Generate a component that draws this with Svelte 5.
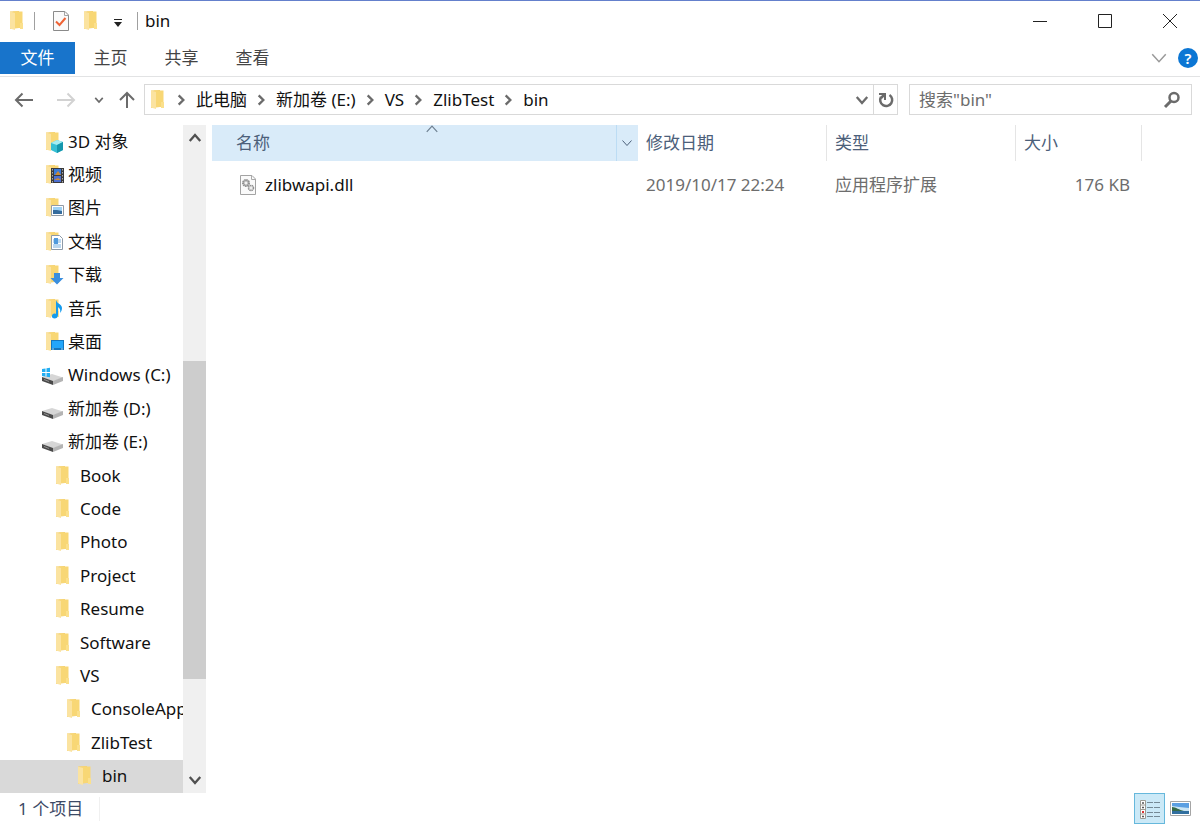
<script lang="ts">
	interface TreeItem {
		name: string;
		level: number;
		icon: string;
	}

	const menus = ['主页', '共享', '查看'];
	const crumbs = ['此电脑', '新加卷 (E:)', 'VS', 'ZlibTest', 'bin'];
	const tree: TreeItem[] = [
		{ name: '3D 对象', level: 0, icon: 'objects' },
		{ name: '视频', level: 0, icon: 'video' },
		{ name: '图片', level: 0, icon: 'picture' },
		{ name: '文档', level: 0, icon: 'document' },
		{ name: '下载', level: 0, icon: 'download' },
		{ name: '音乐', level: 0, icon: 'music' },
		{ name: '桌面', level: 0, icon: 'desktop' },
		{ name: 'Windows (C:)', level: 0, icon: 'system' },
		{ name: '新加卷 (D:)', level: 0, icon: 'drive' },
		{ name: '新加卷 (E:)', level: 0, icon: 'drive' },
		{ name: 'Book', level: 1, icon: 'folder' },
		{ name: 'Code', level: 1, icon: 'folder' },
		{ name: 'Photo', level: 1, icon: 'folder' },
		{ name: 'Project', level: 1, icon: 'folder' },
		{ name: 'Resume', level: 1, icon: 'folder' },
		{ name: 'Software', level: 1, icon: 'folder' },
		{ name: 'VS', level: 1, icon: 'folder' },
		{ name: 'ConsoleApp', level: 2, icon: 'folder' },
		{ name: 'ZlibTest', level: 2, icon: 'folder' },
		{ name: 'bin', level: 3, icon: 'folder' }
	];
	const files = [
		{ name: 'zlibwapi.dll', date: '2019/10/17 22:24', type: '应用程序扩展', size: '176 KB' }
	];
	// share of the tree above, inside and below the visible part
	const scroll = { above: 209, visible: 316, below: 88 };

	let selected = $state('bin');
	let view = $state('details');
</script>

{#snippet folder()}
	<path d="M2 2.5 11 2v17l-9 1z" fill="#f3cf6e" />
	<path d="M5 2.500h9.500v16.500H5z" fill="#f8d775" />
	<path d="M2 2.500 7 4v17L2 19.500z" fill="#fbe3a0" />
	<path d="M12 14h3v6h-3z" fill="#fbe08c" />
{/snippet}

{#snippet folderIcon()}
	<svg class="icon" width="24" height="24" viewBox="0 0 24 24" aria-hidden="true">
		{@render folder()}
	</svg>
{/snippet}

{#snippet chevron(dir: string, size: number, weight: number)}
	<svg width={size} height={size} viewBox="0 0 12 12" fill="none" stroke="currentColor" stroke-width={weight} aria-hidden="true">
		{#if dir === 'down'}
			<path d="M1.500 3.500 6 8.500l4.500-5" />
		{:else if dir === 'up'}
			<path d="M1.500 8.500 6 3.500l4.500 5" />
		{:else}
			<path d="M4 2l4 4-4 4" />
		{/if}
	</svg>
{/snippet}

{#snippet treeIcon(icon: string)}
	<svg class="icon" width="24" height="24" viewBox="0 0 24 24" aria-hidden="true">
		{#if icon === 'drive' || icon === 'system'}
			<path d="M0 14 10 11l11 3.500-10 4z" fill="#d6d6d6" />
			<path d="M0 14l11 4v4L0 18z" fill="#4a4a4a" />
			<path d="M11 18l10-4v4l-10 4z" fill="#b4b4b4" />
			<path d="M2 16.500l5 2" stroke="#8d8d8d" />
			{#if icon === 'system'}
				<path d="M0 6l3.500-.5v3.500H0zM4.500 5.300 8 4.800v4.200H4.500zM0 10h3.500v3.500L0 13zM4.500 10H8v4.200l-3.500-.5z" fill="#23aef2" />
			{/if}
		{:else if icon === 'folder'}
			{@render folder()}
		{:else}
			<g transform="translate(2 0)">{@render folder()}</g>
			{#if icon === 'objects'}
				<path d="M9 13l6-3 6 2v8l-6 3-6-3z" fill="#35bfd3" />
				<path d="M9 13l6-3 6 2-6 3z" fill="#a5edf2" />
				<path d="M15 15l6-3v8l-6 3z" fill="#1597ad" />
			{:else if icon === 'video'}
				<path d="M9 5h13v15H9z" fill="#39393b" />
				<path d="M12 6h7v6h-7z" fill="#3979d8" />
				<path d="M12 13h7v6h-7z" fill="#4d6fd0" />
				<path d="M13 12l3-4 3 4zM12 17l4-2 3 2" fill="#c98936" />
				<path d="M10.500 6v14M20.500 6v14" stroke="#aaa" stroke-dasharray="1.500 1.500" />
			{:else if icon === 'picture'}
				<path d="M9.500 9.500h12v10h-12z" fill="#fff" stroke="#929ba5" />
				<path d="M11 11h9v4h-9z" fill="#9ed2f4" />
				<path d="M11 14l4 0 5 1v3h-9z" fill="#356c9d" />
			{:else if icon === 'document'}
				<path d="M9.500 5.500h8l3 3v11h-11z" fill="#fff" stroke="#8d9aa8" />
				<path d="M11 10h8M11 12h8M11 15h8M11 17h8" stroke="#75afe0" />
				<path d="M12 8h4v6h-4z" fill="#4f9adc" />
			{:else if icon === 'download'}
				<path d="M12 10h6v5h3.500L15 21.500 8.500 15H12z" fill="#3a8fdf" />
			{:else if icon === 'music'}
				<path d="M14 3c1 4 6 4 6 8 0 2-1 4-2 5 1-4-1-5-2-6v8c0 5-7 4-6 1 0-2 2-3 4-2z" fill="#159bed" />
			{:else}
				<path d="M9 10h13v10H9z" fill="#1476bd" />
				<path d="M10 11h11v7H10z" fill="#22a6fa" />
				<path d="M10 19h2M19 19h2" stroke="#9cd3f5" />
			{/if}
		{/if}
	</svg>
{/snippet}

<div class="window">
	<header class="titlebar">
		<div class="quick">
			{@render folderIcon()}
			<span class="divider"></span>
			<button class="quick-btn" aria-label="属性">
				<svg width="18" height="22" viewBox="0 0 18 22" fill="none" aria-hidden="true">
					<path d="M1.500 1.500H13l3.500 3.500v15.500h-15z" fill="#fafafa" stroke="#8a8a8a" />
					<path d="M12.500 1.500V5.500h4" stroke="#a5a5a5" />
					<path d="M4 11.500l3.500 3.500 6-7" stroke="#ef6335" stroke-width="2" />
				</svg>
			</button>
			<button class="quick-btn new-folder" aria-label="新建文件夹">{@render folderIcon()}</button>
			<button class="customize" aria-label="自定义快速访问工具栏">
				<svg width="10" height="10" viewBox="0 0 10 10" fill="#222" aria-hidden="true">
					<path d="M1 1h8v1H1zM1 4h8L5 9z" />
				</svg>
			</button>
			<span class="divider"></span>
		</div>
		<h1 class="title">bin</h1>
		<div class="controls">
			<button aria-label="最小化">
				<svg width="16" height="16" viewBox="0 0 16 16" stroke="#222"><path d="M1 8.500h14" /></svg>
			</button>
			<button aria-label="最大化">
				<svg width="16" height="16" viewBox="0 0 16 16" fill="none" stroke="#222"><path d="M1.500 1.500h13v13h-13z" /></svg>
			</button>
			<button aria-label="关闭">
				<svg width="16" height="16" viewBox="0 0 16 16" stroke="#222"><path d="M1 1l14 14M15 1 1 15" /></svg>
			</button>
		</div>
	</header>

	<nav class="menubar">
		<button class="menu file">文件</button>
		{#each menus as menu}
			<button class="menu">{menu}</button>
		{/each}
		<div class="menu-tools">
			<button class="expand" aria-label="展开功能区">{@render chevron('down', 18, 1)}</button>
			<button class="help" aria-label="帮助">?</button>
		</div>
	</nav>

	<div class="navbar">
		<div class="history">
			<button aria-label="后退">
				<svg width="20" height="18" viewBox="0 0 20 18" fill="none" stroke="#6b6b6b" stroke-width="2"><path d="M19 9H2M8.500 2.500 2 9l6.500 6.500" /></svg>
			</button>
			<button aria-label="前进" disabled>
				<svg width="20" height="18" viewBox="0 0 20 18" fill="none" stroke="#d2d2d2" stroke-width="2"><path d="M1 9h17M11.500 2.500 18 9l-6.500 6.500" /></svg>
			</button>
			<button class="recent" aria-label="最近浏览的位置">{@render chevron('down', 10, 2)}</button>
			<button aria-label="向上">
				<svg width="18" height="20" viewBox="0 0 18 20" fill="none" stroke="#6b6b6b" stroke-width="2"><path d="M9 18V3M2 10l7-7 7 7" /></svg>
			</button>
		</div>
		<div class="address">
			{@render folderIcon()}
			{#each crumbs as crumb}
				<span class="crumb-sep">{@render chevron('right', 14, 2)}</span>
				<a class="crumb" href="#{crumb}">{crumb}</a>
			{/each}
			<button class="drop" aria-label="以前的位置">{@render chevron('down', 14, 2)}</button>
			<button class="refresh" aria-label="刷新">
				<svg width="18" height="18" viewBox="0 0 18 18" fill="none" stroke="#6b6b6b" stroke-width="2">
					<path d="M12.500 4A6 6 0 1 1 4 6" stroke-width="2.500" />
					<path d="M2 3h6v6" />
					<path d="M4 7l3.500-3.500" stroke-width="2.500" />
				</svg>
			</button>
		</div>
		<div class="search">
			<input type="search" placeholder="搜索&quot;bin&quot;" aria-label="搜索" />
			<svg width="18" height="18" viewBox="0 0 18 18" fill="none" stroke="#6b6b6b" aria-hidden="true">
				<circle cx="11" cy="6.500" r="4.500" stroke-width="2.500" />
				<path d="M8 10l-6 6" stroke-width="3" />
			</svg>
		</div>
	</div>

	<main class="body">
		<aside class="sidebar">
			<div class="tree">
				{#each tree as item}
					<button
						class="tree-item"
						class:selected={selected === item.name}
						style="padding-left: {42 + Math.ceil(item.level * 11.3)}px"
						onclick={() => (selected = item.name)}
					>
						{@render treeIcon(item.icon)}
						<span>{item.name}</span>
					</button>
				{/each}
			</div>
			<div class="scrollbar">
				<button aria-label="向上滚动">{@render chevron('up', 14, 2)}</button>
				<div style="flex-grow: {scroll.above}"></div>
				<div class="thumb" style="flex-grow: {scroll.visible}"></div>
				<div style="flex-grow: {scroll.below}"></div>
				<button aria-label="向下滚动">{@render chevron('down', 14, 2)}</button>
			</div>
		</aside>

		<section class="content">
			<table class="files">
				<colgroup>
					<col class="col-name" />
					<col class="col-date" />
					<col class="col-type" />
					<col class="col-size" />
					<col />
				</colgroup>
				<thead>
					<tr>
						<th class="sorted">
							<div class="sorted-inner">
								<span>名称</span>
								<button aria-label="筛选">{@render chevron('down', 12, 1)}</button>
							</div>
							<span class="sort-mark">{@render chevron('up', 14, 1)}</span>
						</th>
						<th>修改日期</th>
						<th>类型</th>
						<th>大小</th>
						<td></td>
					</tr>
				</thead>
				<tbody>
					{#each files as file}
						<tr>
							<td class="name">
								<div class="name-inner">
									<svg width="18" height="22" viewBox="0 0 18 22" fill="none" aria-hidden="true">
										<path d="M1.500 1.500H13l3.500 3.500v15.500h-15z" fill="#fafafa" stroke="#a3a3a3" />
										<path d="M12.500 1.500V5.500h4" stroke="#aaa" />
										<circle cx="7" cy="9" r="3" fill="#ccc" stroke="#909090" stroke-width="2" stroke-dasharray="1.500 .5" />
										<circle cx="7" cy="9" r="1" fill="#fff" />
										<circle cx="12" cy="14" r="2.500" fill="#eee" stroke="#909090" stroke-width="1.500" stroke-dasharray="1.500 .5" />
									</svg>
									<span>{file.name}</span>
								</div>
							</td>
							<td>{file.date}</td>
							<td>{file.type}</td>
							<td class="size">{file.size}</td>
							<td></td>
						</tr>
					{/each}
				</tbody>
			</table>
		</section>
	</main>

	<footer class="statusbar">
		<span class="count">1 个项目</span>
		<div class="views">
			<button class:active={view === 'details'} aria-label="详细信息" onclick={() => (view = 'details')}>
				<svg width="22" height="22" viewBox="0 0 22 22" fill="none" aria-hidden="true">
					<path d="M1.500 2.500h5v18h-5zM1.500 7h5M1.500 11.500h5M1.500 16h5" fill="#fff" stroke="#9c9c94" />
					<path d="M3 5h2M3 9.500h2M3 18.500h2" stroke="#555" stroke-width="1.500" />
					<path d="M3 14h2" stroke="#d33" stroke-width="2" />
					<path d="M8 4.500h6M15 4.500h6M8 9.500h6M15 9.500h6M8 14.500h6M15 14.500h6M8 18.500h6M15 18.500h6" stroke="#758a96" />
				</svg>
			</button>
			<button class:active={view === 'icons'} aria-label="大图标" onclick={() => (view = 'icons')}>
				<svg width="22" height="16" viewBox="0 0 22 16" aria-hidden="true">
					<path d="M.5.500h20v14H.5z" fill="#fff" stroke="#a5a5a5" />
					<path d="M2 2h17v5H2z" fill="#5b9fe2" />
					<path d="M2 5l7 1 10 1v3H2z" fill="#c9e4f4" />
					<path d="M2 6c4 0 7 3 12 4H2z" fill="#376b48" />
					<path d="M2 10h17v3H2z" fill="#316f9f" />
				</svg>
			</button>
		</div>
	</footer>
</div>

<style>
	:global(body) {
		background: #fff;
	}

	.window {
		display: flex;
		flex-direction: column;
		min-height: 100vh;
		box-sizing: border-box;
		border-top: 1px solid #6480cc;
		background: #fff;
		color: #111;
		font-family: 'Noto Sans', 'Noto Sans CJK SC', sans-serif;
		font-size: 17px;
		line-height: 24px;
	}

	button {
		display: flex;
		align-items: center;
		justify-content: center;
		margin: 0;
		padding: 0;
		border: none;
		background: none;
		color: inherit;
		font: inherit;
	}

	svg {
		display: block;
		flex: none;
	}

	/* 标题栏 */
	.titlebar {
		display: flex;
		align-items: center;
		height: 39px;
		margin-bottom: 2px;
	}

	.quick {
		display: flex;
		align-items: center;
		padding-left: 8px;
	}

	.quick-btn {
		margin-left: 9px;
	}

	.quick-btn.new-folder {
		margin-left: 12px;
	}

	.customize {
		width: 24px;
		height: 24px;
		padding-top: 4px;
		box-sizing: border-box;
	}

	.divider {
		width: 1px;
		height: 18px;
		margin: 0 8px 0 2px;
		background: #a0a0a0;
	}

	.customize + .divider {
		margin: 0 7px;
	}

	.title {
		margin: 0;
		font-size: 17px;
		font-weight: 400;
	}

	.controls {
		display: flex;
		margin-left: auto;
	}

	.controls button {
		width: 65px;
		height: 39px;
	}

	.controls button:first-child {
		width: 64px;
	}

	.controls button:last-child {
		width: 66px;
		padding-right: 0;
		margin-right: -3px;
	}

	/* 菜单栏 */
	.menubar {
		display: flex;
		height: 34px;
		border-bottom: 1px solid #e2e3e4;
	}

	.menu {
		width: 71px;
		height: 32px;
		color: #444;
	}

	.menu.file {
		width: 75px;
		background: #1874cb;
		color: #fff;
	}

	.menu-tools {
		display: flex;
		align-items: center;
		gap: 10px;
		margin-left: auto;
		padding: 0 2px 2px 0;
	}

	.expand {
		color: #999;
	}

	.help {
		width: 20px;
		height: 20px;
		border-radius: 50%;
		background: #0b76d4;
		color: #fff;
		font-size: 15px;
		font-weight: 600;
	}

	/* 地址栏 */
	.navbar {
		display: flex;
		align-items: center;
		padding: 7px 8px 10px 14px;
	}

	.history {
		display: flex;
		align-items: center;
		width: 130px;
		gap: 22px;
	}

	.recent {
		width: 10px;
		margin: 0 -8px 0 -4px;
		color: #6b6b6b;
	}

	.address {
		display: flex;
		flex: 1;
		align-items: center;
		min-width: 0;
		height: 29px;
		padding-left: 4px;
		border: 1px solid #d9d9d9;
	}

	.crumb-sep {
		width: 14px;
		margin: 0 8px 0 7px;
		color: #6b6b6b;
	}

	.address .icon + .crumb-sep {
		margin-left: 1px;
	}

	.crumb {
		color: inherit;
		text-decoration: none;
		white-space: nowrap;
	}

	.drop {
		margin-left: auto;
		width: 22px;
		height: 29px;
		color: #6b6b6b;
	}

	.refresh {
		width: 24px;
		height: 29px;
		border-left: 1px solid #d9d9d9;
	}

	.search {
		display: flex;
		align-items: center;
		box-sizing: border-box;
		width: 283px;
		height: 31px;
		margin-left: 11px;
		padding: 0 10px 0 9px;
		border: 1px solid #d9d9d9;
	}

	.search input {
		flex: 1;
		min-width: 0;
		padding: 0;
		border: none;
		outline: none;
		background: none;
		font: inherit;
	}

	.search input::placeholder {
		color: #6d6d6d;
	}

	/* 主体 */
	.body {
		display: flex;
		flex: 1;
	}

	.sidebar {
		display: flex;
		flex: none;
		width: 206px;
		margin-right: 6px;
	}

	.tree {
		display: grid;
		grid-auto-rows: 1fr;
		flex: 1;
		min-width: 0;
	}

	.tree-item {
		justify-content: flex-start;
		gap: 2px;
		min-width: 0;
		overflow: hidden;
		white-space: nowrap;
	}

	.tree-item.selected {
		background: #d9d9d9;
	}

	.scrollbar {
		display: flex;
		flex-direction: column;
		width: 23px;
		background: #f0f0f0;
	}

	.scrollbar button {
		height: 26px;
		color: #505050;
	}

	.thumb {
		background: #cdcdcd;
	}

	.content {
		flex: 1;
		min-width: 0;
	}

	.files {
		width: 100%;
		border-collapse: separate;
		border-spacing: 0;
		table-layout: fixed;
		color: #6d6d6d;
	}

	.col-name {
		width: 426px;
	}

	.col-date,
	.col-type {
		width: 189px;
	}

	.col-size {
		width: 126px;
	}

	th {
		height: 36px;
		padding: 0 0 0 8px;
		border-right: 1px solid #e5e5e5;
		color: #4c607a;
		font-weight: 400;
		text-align: left;
	}

	th.sorted {
		position: relative;
		padding: 0;
		border: none;
		background: #d9ebf9;
	}

	.sorted-inner {
		display: flex;
		align-items: center;
		justify-content: space-between;
		height: 36px;
		padding-left: 24px;
	}

	.sorted-inner button {
		width: 22px;
		height: 36px;
		padding-right: 2px;
		border-left: 1px solid #bcdcf4;
		box-sizing: border-box;
	}

	.sort-mark {
		position: absolute;
		top: -3px;
		left: 50%;
		color: #6d7f90;
	}

	tbody td {
		height: 34px;
		padding: 7px 0 0 8px;
	}

	tbody td.name {
		padding-left: 27px;
		color: #111;
	}

	.name-inner {
		display: flex;
		align-items: center;
		gap: 8px;
	}

	tbody td.size {
		padding-right: 12px;
		text-align: right;
	}

	/* 状态栏 */
	.statusbar {
		display: flex;
		align-items: center;
		justify-content: space-between;
		height: 31px;
		color: #3c4a66;
	}

	.count {
		margin-left: 18px;
		padding-right: 16px;
		border-right: 1px solid #f0f0f0;
	}

	.views {
		display: flex;
	}

	.views button {
		box-sizing: border-box;
		width: 31px;
		height: 31px;
		border: 1px solid transparent;
	}

	.views button.active {
		border-color: #66b8dc;
		background: #cbe9f7;
	}

	.views button:last-child {
		margin-right: 4px;
	}
</style>
